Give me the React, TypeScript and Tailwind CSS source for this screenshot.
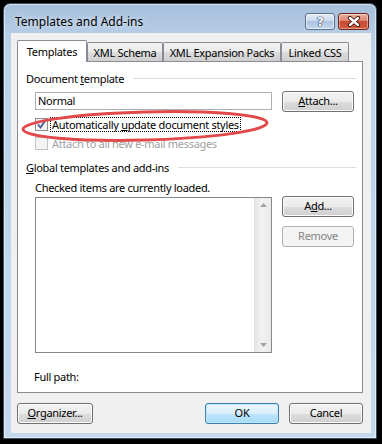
import type { ReactNode } from "react";

// Win7 classic push button face
const face = "bg-[linear-gradient(#f2f2f2_0%,#ebebeb_50%,#dddddd_50%,#cfcfcf_100%)]";

function Button({
  children,
  className = "",
  disabled,
  focused,
}: {
  children: ReactNode;
  className?: string;
  disabled?: boolean;
  focused?: boolean;
}) {
  if (disabled) {
    return (
      <div
        className={`h-[21px] shrink-0 rounded-[3px] border border-[#adb2b5] bg-[#f4f4f4] text-[#838383] flex items-center justify-center ${className}`}
      >
        {children}
      </div>
    );
  }
  return (
    <div
      className={`h-[21px] shrink-0 rounded-[3px] border flex items-center justify-center text-black ${
        focused
          ? "border-[#3c7fb1] bg-[linear-gradient(#eaf6fd_0%,#d9f0fc_50%,#bee6fd_50%,#a7d9f5_100%)] shadow-[inset_0_0_0_1px_#c4e5f6]"
          : `border-[#707070] ${face} shadow-[inset_0_0_0_1px_#fcfcfc]`
      } ${className}`}
    >
      {children}
    </div>
  );
}

function Checkbox({ checked, disabled }: { checked?: boolean; disabled?: boolean }) {
  return (
    <div
      className={`w-[13px] h-[13px] shrink-0 border flex items-center justify-center ${
        disabled
          ? "border-[#c4c4c4] bg-[#f4f4f4]"
          : "border-[#8e8f8f] bg-[linear-gradient(135deg,#dcdcdc,#ffffff)] shadow-[inset_0_0_0_1px_#f4f4f4]"
      }`}
    >
      {checked && (
        <svg width="9" height="9" viewBox="0 0 9 9">
          <path d="M1 4.5 L3.5 7.5 L8 1" fill="none" stroke="#4a5f97" strokeWidth="1.8" />
        </svg>
      )}
    </div>
  );
}

function SectionHeader({ children, className = "" }: { children: ReactNode; className?: string }) {
  return (
    <div className={`flex items-center h-[15px] leading-[15px] ${className}`}>
      <span className="whitespace-nowrap">{children}</span>
      <div className="flex-1 h-px bg-[#d5dfe5] ml-[9px]" />
    </div>
  );
}

function Tab({ label, selected, className = "" }: { label: string; selected?: boolean; className?: string }) {
  if (selected) {
    return (
      <div
        className={`relative z-10 -mb-px h-[22px] border border-b-0 border-[#898c95] bg-white rounded-t-[2px] flex items-center justify-center leading-none whitespace-nowrap ${className}`}
      >
        {label}
      </div>
    );
  }
  return (
    <div
      className={`h-[19px] border border-b-0 border-[#898c95] rounded-t-[2px] bg-[linear-gradient(#f3f3f3_0%,#ebebeb_50%,#dddddd_50%,#cfcfcf_100%)] flex items-center justify-center leading-none whitespace-nowrap pt-px ${className}`}
    >
      {label}
    </div>
  );
}

export default function App() {
  return (
    <div className="relative w-[382px] h-[444px] bg-black pt-[3px] pl-[3px] font-['Segoe_UI','Noto_Sans',sans-serif] text-[11px] tracking-[-0.3px] text-black">
      {/* window frame */}
      <div className="w-[374px] h-[436px] rounded-t-[7px] border border-[#3d4d61] bg-[linear-gradient(#a6bfdb,#bad1ea_40px,#c4d9ee)] shadow-[inset_0_0_0_1px_rgba(255,255,255,0.55)] flex flex-col">
        {/* title bar */}
        <div className="h-[29px] flex items-start pt-[9px] pl-[11px] pr-[7px]">
          <span className="flex-1 leading-[17px] text-[12px] tracking-normal [text-shadow:0_0_6px_rgba(255,255,255,0.9)]">
            Templates and Add-ins
          </span>
          <div className="w-[30px] h-[17px] rounded-[3px] border border-[#5a6f8b] bg-[linear-gradient(#e3ecf7_0%,#ccdbee_45%,#aec4e0_50%,#c3d6ec_100%)] shadow-[inset_0_0_0_1px_rgba(255,255,255,0.6)] flex items-center justify-center">
            <span className="text-white font-bold text-[12px] leading-none font-['DejaVu_Sans',sans-serif] [text-shadow:0_0_1px_#1d3350,0_0_1px_#1d3350,0_0_1px_#1d3350]">
              ?
            </span>
          </div>
          <div className="ml-[3px] w-[31px] h-[17px] rounded-[3px] border border-[#6e2318] bg-[linear-gradient(#eab0a3_0%,#dd8670_45%,#c74a32_50%,#d05a3e_100%)] shadow-[inset_0_0_0_1px_rgba(255,255,255,0.4)] flex items-center justify-center">
            <svg width="14" height="11" viewBox="0 0 14 11">
              <path d="M3 2 L11 9 M11 2 L3 9" stroke="#3b1009" strokeWidth="4.2" strokeLinecap="round" />
              <path d="M3 2 L11 9 M11 2 L3 9" stroke="#ffffff" strokeWidth="2.4" strokeLinecap="round" />
            </svg>
          </div>
        </div>

        {/* client area */}
        <div className="ml-[7px] mr-[5px] h-[400px] bg-[#f0f0f0] pt-[7px] pl-[6px] pr-[8px] pb-[9px] flex flex-col">
          {/* tabs */}
          <div className="h-[21px] flex items-end">
            <Tab label="Templates" selected className="w-[70px]" />
            <Tab label="XML Schema" className="w-[76px]" />
            <Tab label="XML Expansion Packs" className="w-[118px]" />
            <Tab label="Linked CSS" className="w-[68px]" />
          </div>

          {/* tab panel */}
          <div className="flex-1 border border-[#898c95] bg-white pl-[8px] pr-[6px] flex flex-col">
            <SectionHeader className="mt-[9px]">
              Document <span className="underline">t</span>emplate
            </SectionHeader>

            <div className="mt-[5px] pl-[9px] flex items-start">
              <div className="mt-px w-[237px] h-[18px] border border-[#abadb3] bg-white px-[2px] leading-[16px]">
                Normal
              </div>
              <Button className="ml-[10px] w-[72px]">
                <span className="underline">A</span>ttach...
              </Button>
            </div>

            <div className="mt-[5px] pl-[9px] h-[15px] flex items-center">
              <Checkbox checked />
              <div className="ml-[2px] h-[15px] border border-dotted border-black px-px leading-[13px] whitespace-nowrap">
                Automatically <span className="underline">u</span>pdate document styles
              </div>
            </div>

            <div className="mt-[4px] pl-[9px] h-[15px] flex items-center text-[#a0a0a0]">
              <Checkbox disabled />
              <div className="ml-[3px] leading-[15px] px-px whitespace-nowrap">Attach to all new e-mail messages</div>
            </div>

            <SectionHeader className="mt-[9px]">
              <span className="underline">G</span>lobal templates and add-ins
            </SectionHeader>

            <div className="mt-[5px] pl-[9px] h-[15px] leading-[15px]">Checked items are currently loaded.</div>

            <div className="mt-px pl-[9px] flex items-start">
              <div className="mt-px w-[237px] h-[156px] border border-[#828790] bg-white flex justify-end">
                <div className="w-[17px] h-full bg-[linear-gradient(90deg,#e5e5e5,#f2f2f2_40%,#eaeaea)] border-l border-[#e3e3e3] flex flex-col items-center justify-between py-[5px]">
                  <svg width="7" height="4" viewBox="0 0 7 4">
                    <path d="M0 4 L3.5 0 L7 4 Z" fill="#a3a3a3" />
                  </svg>
                  <svg width="7" height="4" viewBox="0 0 7 4">
                    <path d="M0 0 L3.5 4 L7 0 Z" fill="#a3a3a3" />
                  </svg>
                </div>
              </div>
              <div className="ml-[10px] flex flex-col">
                <Button className="w-[72px]">
                  A<span className="underline">d</span>d...
                </Button>
                <Button disabled className="mt-[9px] w-[72px]">
                  Remove
                </Button>
              </div>
            </div>

            <div className="mt-[16px] pl-[8px] h-[15px] leading-[15px]">Full path:</div>
          </div>

          {/* bottom buttons */}
          <div className="mt-[10px] flex items-center">
            <Button className="w-[76px]">
              <span className="underline">O</span>rganizer...
            </Button>
            <div className="flex-1" />
            <Button focused className="w-[74px]">
              OK
            </Button>
            <Button className="ml-[10px] w-[74px]">Cancel</Button>
          </div>
        </div>
      </div>

      {/* red annotation ellipse */}
      <svg className="absolute left-0 top-0 pointer-events-none" width="382" height="444" viewBox="0 0 382 444">
        <ellipse
          cx="145"
          cy="126"
          rx="122"
          ry="14"
          transform="rotate(-1.5 145 126)"
          fill="none"
          stroke="#e2494a"
          strokeWidth="3"
        />
      </svg>
    </div>
  );
}
